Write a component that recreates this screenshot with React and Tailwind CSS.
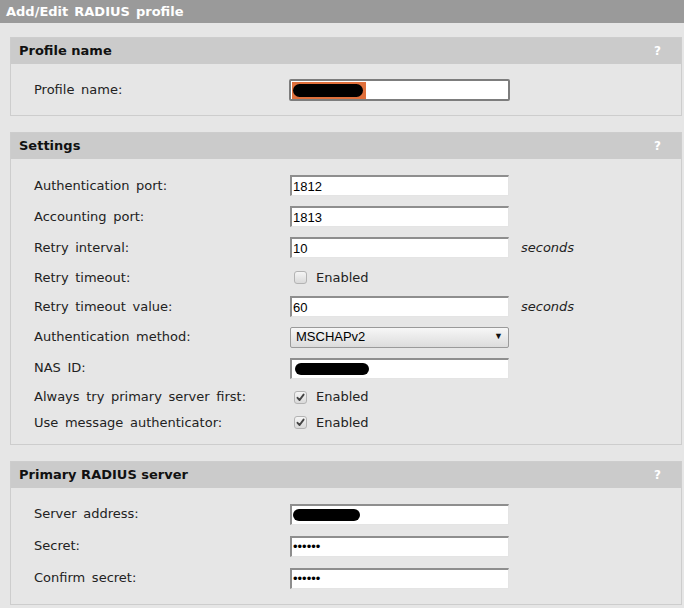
import React from "react";

function Blob({ w, h = 13, ml = 2 }) {
  return <span className="inline-block bg-black rounded-full" style={{ width: w, height: h, marginLeft: ml }} />;
}

function TextBox({ children, focused }) {
  if (focused) {
    return (
      <div className="w-[221px] h-[22px] bg-white border-2 border-[#7d7d7d] rounded-[2px] flex items-center pl-[1px] ml-[-1px]">
        {children}
      </div>
    );
  }
  return (
    <div className="w-[219px] h-[21px] bg-white border-t-2 border-l-2 border-t-[#8e8e8e] border-l-[#8e8e8e] border-r border-b border-r-[#e4e4e4] border-b-[#e4e4e4] flex items-center pl-[1px] font-['Liberation_Sans',Arial,sans-serif] text-[13px] text-black leading-none">
      {children}
    </div>
  );
}

function Check({ checked }) {
  return (
    <span className="ml-[4px] w-[13px] h-[13px] rounded-[3px] border border-[#b3b3b3] bg-gradient-to-b from-[#f5f5f5] to-[#d9d9d9] flex items-center justify-center">
      {checked && (
        <svg width="9" height="9" viewBox="0 0 9 9">
          <path d="M1.5 4.8 L3.6 7 L7.6 1.6" fill="none" stroke="#444" strokeWidth="1.9" strokeLinecap="round" strokeLinejoin="round" />
        </svg>
      )}
    </span>
  );
}

function Row({ label, h, children }) {
  return (
    <div className="flex items-center pl-[23px]" style={{ height: h }}>
      <div className="w-[256px] text-[#222] [word-spacing:2.5px]">{label}</div>
      {children}
    </div>
  );
}

function Seconds() {
  return <span className="ml-[12px] italic text-[#222]">seconds</span>;
}

function Enabled({ checked }) {
  return (
    <div className="flex items-center">
      <Check checked={checked} />
      <span className="ml-[9px] text-[#222]">Enabled</span>
    </div>
  );
}

function Section({ title, children, pt = "pt-[11px]", pb = "pb-[10px]" }) {
  return (
    <div className="border border-[#cdcdcd]">
      <div className="h-[26px] bg-[#cbcbcb] flex items-center justify-between pl-[8px] pr-[20px]">
        <span className="font-bold text-[#111]">{title}</span>
        <span className="font-bold text-white text-[12px]">?</span>
      </div>
      <div className={`${pt} ${pb}`}>{children}</div>
    </div>
  );
}

export default function App() {
  return (
    <div className="w-[684px] h-[608px] overflow-hidden bg-[#e6e6e6] font-['DejaVu_Sans',Verdana,sans-serif] text-[13px]">
      <div className="h-[23px] bg-[#9a9a9a] text-white font-bold pl-[6px] flex items-center [word-spacing:1.5px]">
        Add/Edit RADIUS profile
      </div>
      <div className="pl-[10px] pr-[2px] pt-[14px] flex flex-col gap-[16px]">
        <Section title="Profile name" pt="pt-[10px]" pb="pb-[9px]">
          <Row label="Profile name:" h={32}>
            <TextBox focused>
              <span className="inline-flex items-center h-[17px] w-[74px] bg-[#e0703c]">
                <Blob w={70} h={13} ml={1} />
              </span>
            </TextBox>
          </Row>
        </Section>

        <Section title="Settings">
          <Row label="Authentication port:" h={31}>
            <TextBox>1812</TextBox>
          </Row>
          <Row label="Accounting port:" h={31}>
            <TextBox>1813</TextBox>
          </Row>
          <Row label="Retry interval:" h={31}>
            <TextBox>10</TextBox>
            <Seconds />
          </Row>
          <Row label="Retry timeout:" h={29}>
            <Enabled />
          </Row>
          <Row label="Retry timeout value:" h={29}>
            <TextBox>60</TextBox>
            <Seconds />
          </Row>
          <Row label="Authentication method:" h={32}>
            <div className="w-[219px] h-[21px] border border-[#9a9a9a] rounded-[2px] bg-gradient-to-b from-[#f7f7f7] to-[#dcdcdc] flex items-center justify-between pl-[5px] pr-[5px] font-['Liberation_Sans',Arial,sans-serif] text-[13px] text-black">
              <span>MSCHAPv2</span>
              <span className="text-[9px] text-[#111]">▼</span>
            </div>
          </Row>
          <Row label="NAS ID:" h={30}>
            <TextBox>
              <Blob w={74} h={12} ml={2} />
            </TextBox>
          </Row>
          <Row label="Always try primary server first:" h={28}>
            <Enabled checked />
          </Row>
          <Row label="Use message authenticator:" h={23}>
            <Enabled checked />
          </Row>
        </Section>

        <Section title="Primary RADIUS server" pt="pt-[10px]">
          <Row label="Server address:" h={32}>
            <TextBox>
              <Blob w={67} h={12} ml={0} />
            </TextBox>
          </Row>
          <Row label="Secret:" h={32}>
            <TextBox>••••••</TextBox>
          </Row>
          <Row label="Confirm secret:" h={32}>
            <TextBox>••••••</TextBox>
          </Row>
        </Section>
      </div>
    </div>
  );
}
